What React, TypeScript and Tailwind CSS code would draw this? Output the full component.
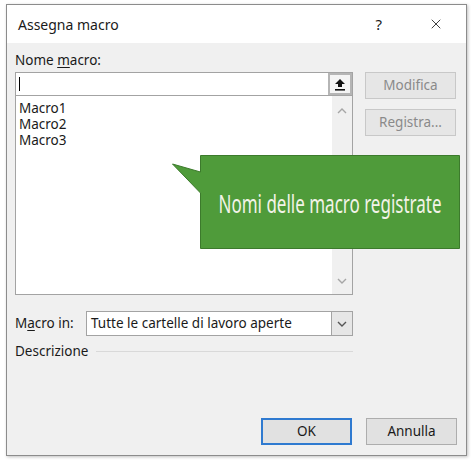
import { X } from "lucide-react";

const ui = { fontFamily: '"Noto Sans", "Open Sans", sans-serif' };

// small chevron used by the list scrollbar and the combo box
const Chevron = ({ up = false, color = "#a6a6a6" }: { up?: boolean; color?: string }) => (
  <svg width="10" height="6" viewBox="0 0 10 6" className={up ? "rotate-180" : ""}>
    <path d="M1 1 L5 5 L9 1" fill="none" stroke={color} strokeWidth="1.4" />
  </svg>
);

const UploadIcon = () => (
  <svg width="12" height="13" viewBox="0 0 12 13">
    <path d="M6 1 L11 6 H8 V9 H4 V6 H1 Z" fill="#111" />
    <rect x="1" y="11" width="10" height="1.6" fill="#111" />
  </svg>
);

const DialogButton = ({ label, disabled = false, primary = false }: { label: string; disabled?: boolean; primary?: boolean }) => (
  <div
    className={`w-[91px] h-[27px] flex items-center justify-center text-[13.5px] ${
      primary
        ? "border-2 border-[#2f7ad0] bg-[#e1e1e1] text-[#1a1a1a]"
        : disabled
        ? "border border-[#c8c8c8] bg-[#e6e6e6] text-[#8a8a8a]"
        : "border border-[#adadad] bg-[#e1e1e1] text-[#1a1a1a]"
    }`}
  >
    {label}
  </div>
);

export default function App() {
  return (
    <div className="w-[474px] h-[462px] bg-white pt-[4px] pl-[6px]" style={ui}>
      <div className="w-[461px] h-[452px] border border-[#8c8c8c] shadow-[1px_1px_3px_rgba(0,0,0,0.25)] flex flex-col">
        {/* title bar */}
        <div className="h-[38px] bg-white flex items-center pl-[11px] pr-[22px] text-[14px] text-[#1a1a1a]">
          <span>Assegna macro</span>
          <span className="ml-auto mr-[46px] text-[15px]">?</span>
          <X size={16} strokeWidth={1.3} color="#222" />
        </div>

        {/* body */}
        <div className="flex-1 bg-[#f0f0f0] relative flex flex-col pl-[8px] pr-[9px] pt-[8px] pb-[10px] text-[13.5px] text-[#1a1a1a]">
          <div className="flex gap-[12px]">
            <div className="w-[338px] flex flex-col">
              <div className="h-[18px] leading-[18px]">
                Nome <span className="underline underline-offset-2">m</span>acro:
              </div>
              <div className="mt-[3px] h-[24px] bg-white border border-[#a3a3a3] flex items-center">
                <div className="ml-[3px] w-[1px] h-[14px] bg-black" />
                <div className="ml-auto w-[24px] h-[22px] bg-[#f4f4f4] border-2 border-[#b5b5b5] flex items-center justify-center">
                  <UploadIcon />
                </div>
              </div>
              <div className="h-[199px] bg-white border border-[#a3a3a3] border-t-0 flex">
                <div className="flex-1 pl-[3px] pt-[4px]">
                  <div className="h-[16px] leading-[16px]">Macro1</div>
                  <div className="h-[16px] leading-[16px]">Macro2</div>
                  <div className="h-[16px] leading-[16px]">Macro3</div>
                </div>
                <div className="w-[20px] bg-[#f0f0f0] flex flex-col items-center justify-between pt-[12px] pb-[10px]">
                  <Chevron up />
                  <Chevron />
                </div>
              </div>
            </div>

            <div className="flex flex-col gap-[10px] pt-[21px]">
              <DialogButton label="Modifica" disabled />
              <DialogButton label="Registra..." disabled />
            </div>
          </div>

          <div className="w-[338px] mt-[16px] flex items-center">
            <div className="w-[71px]">
              M<span className="underline underline-offset-2">a</span>cro in:
            </div>
            <div className="flex-1 h-[25px] bg-white border border-[#a3a3a3] flex items-center">
              <span className="pl-[4px]">Tutte le cartelle di lavoro aperte</span>
              <div className="ml-auto w-[21px] h-full bg-[#e6e6e6] border-l border-[#a3a3a3] flex items-center justify-center">
                <Chevron color="#555" />
              </div>
            </div>
          </div>

          <div className="w-[338px] mt-[5px] flex items-center gap-[8px]">
            <span>Descrizione</span>
            <div className="flex-1 h-[1px] bg-[#d9d9d9]" />
          </div>

          <div className="mt-auto flex justify-end gap-[14px]">
            <DialogButton label="OK" primary />
            <DialogButton label="Annulla" />
          </div>

          {/* callout over the macro list */}
          <div className="absolute left-[165px] top-[112px] w-[288px] h-[94px]">
            <svg width="288" height="94" viewBox="0 0 288 94" className="absolute inset-0">
              <path
                d="M28.5 0.5 H287.5 V93.5 H28.5 V38 L0.5 9 L28.5 17 Z"
                fill="#4f9b3a"
                stroke="#3c7a2c"
                strokeWidth="1"
              />
            </svg>
            <div className="relative ml-[28px] h-full flex items-center justify-center pt-[4px]">
              <span
                className="whitespace-nowrap text-[25px] text-[#f3f3e8] scale-x-[0.68]"
                style={{ fontFamily: '"Noto Sans", sans-serif' }}
              >
                Nomi delle macro registrate
              </span>
            </div>
          </div>
        </div>
      </div>
    </div>
  );
}
